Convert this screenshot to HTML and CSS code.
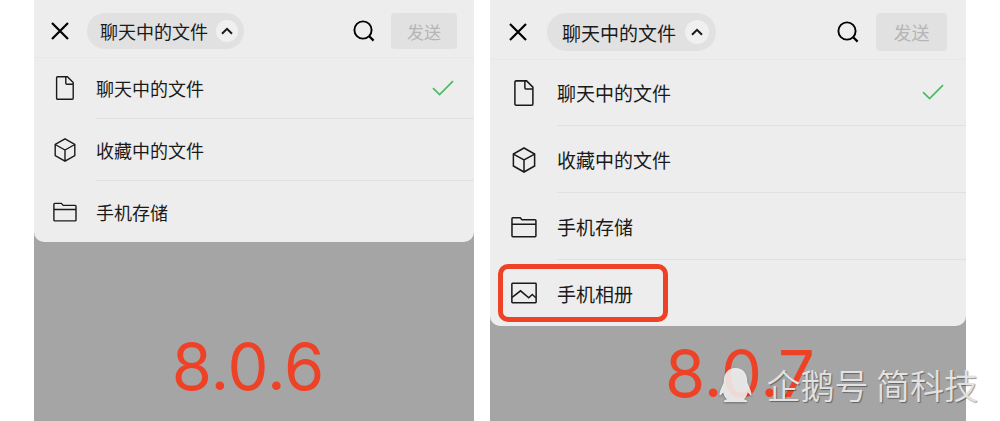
FILE: index.html
```
<!DOCTYPE html>
<html lang="zh-CN">
<head>
<meta charset="UTF-8">
<meta name="viewport" content="width=device-width, initial-scale=1.0">
<title>聊天中的文件</title>
<link rel="stylesheet" href="styles.css">
</head>
<body>
<!-- Shared icons -->
<svg class="sprite" aria-hidden="true">
  <symbol id="close" viewBox="0 0 18 18"><path d="M1 1l16 16M17 1L1 17" stroke-width="2.2"/></symbol>
  <symbol id="up" viewBox="0 0 12 8"><path d="M1 6.8l5-5 5 5" stroke-width="2"/></symbol>
  <symbol id="search" viewBox="0 0 22 22"><circle cx="10" cy="10" r="8.6" stroke-width="1.9"/><path d="M16 16l4.6 4.6" stroke-width="2.2"/></symbol>
  <symbol id="file" viewBox="0 0 24 24"><path d="M4.6 .8h9.8l5.8 5.8v15.6a1 1 0 0 1-1 1H4.6a1 1 0 0 1-1-1V1.8a1 1 0 0 1 1-1zM12.8 1v6.2a1 1 0 0 0 1 1h6.2"/></symbol>
  <symbol id="cube" viewBox="0 0 24 24"><path d="M12 .9l9.800 5.600v11L12 23.100l-9.800-5.600v-11zM2.200 6.500L12 12l9.800-5.500M12 12v11"/></symbol>
  <symbol id="folder" viewBox="0 0 24 24"><path d="M1.700 3.400h6.700l1.800 2h12a.8.8 0 0 1 .8.8v13.900a.8.8 0 0 1-.8.8H1.700a.8.8 0 0 1-.8-.8V4.200a.8.8 0 0 1 .8-.8zM1 9.500h22"/></symbol>
  <symbol id="photo" viewBox="0 0 24 24"><rect x=".8" y="3" width="22.4" height="18" rx=".6"/><path d="M1 16l7.800-6 7.600 6.400 3.200-3 3.600 3.200"/></symbol>
  <symbol id="check" viewBox="0 0 22 16"><path d="M1 8.200l6.600 6.400L21 1.200" stroke-width="1.7"/></symbol>
</svg>

<main class="compare">
  <section class="phone">
    <div class="panel">
      <header class="bar">
        <button class="icon-btn" aria-label="关闭"><svg class="close"><use href="#close"/></svg></button>
        <button class="picker">聊天中的文件<span class="arrow"><svg><use href="#up"/></svg></span></button>
        <button class="icon-btn search-btn" aria-label="搜索"><svg class="search"><use href="#search"/></svg></button>
        <button class="send" disabled>发送</button>
      </header>
      <ul class="menu">
        <li><button class="item"><svg class="icon"><use href="#file"/></svg><span class="label">聊天中的文件<svg class="check"><use href="#check"/></svg></span></button></li>
        <li><button class="item"><svg class="icon"><use href="#cube"/></svg><span class="label">收藏中的文件</span></button></li>
        <li><button class="item"><svg class="icon"><use href="#folder"/></svg><span class="label">手机存储</span></button></li>
      </ul>
    </div>
    <p class="version">8.0.6</p>
  </section>

  <section class="phone phone-new">
    <div class="panel">
      <header class="bar">
        <button class="icon-btn" aria-label="关闭"><svg class="close"><use href="#close"/></svg></button>
        <button class="picker">聊天中的文件<span class="arrow"><svg><use href="#up"/></svg></span></button>
        <button class="icon-btn search-btn" aria-label="搜索"><svg class="search"><use href="#search"/></svg></button>
        <button class="send" disabled>发送</button>
      </header>
      <ul class="menu">
        <li><button class="item"><svg class="icon"><use href="#file"/></svg><span class="label">聊天中的文件<svg class="check"><use href="#check"/></svg></span></button></li>
        <li><button class="item"><svg class="icon"><use href="#cube"/></svg><span class="label">收藏中的文件</span></button></li>
        <li><button class="item"><svg class="icon"><use href="#folder"/></svg><span class="label">手机存储</span></button></li>
        <li class="marked"><button class="item"><svg class="icon"><use href="#photo"/></svg><span class="label">手机相册</span></button></li>
      </ul>
    </div>
    <p class="version">8.0.7</p>
  </section>

  <div class="watermark">
    <svg class="penguin" viewBox="0 0 34 36"><path d="M17.500 1C10 1 6 6.500 5.800 13.500c0 2-.5 3.500-1.500 5.500C2.800 22 1.500 25 1.500 27.500c0 1.200.8 1 1.600.2l2.100-2.200c.6 3 1.900 5 3.900 6.800-2 .7-3.300 1.400-3.300 2.300 0 .3.300.4.800.4h21.800c.5 0 .8-.1.800-.4 0-.9-1.300-1.600-3.300-2.300 2-1.800 3.300-3.800 3.900-6.800l2.100 2.200c.8.8 1.600 1 1.600-.2 0-2.500-1.300-5.500-2.800-8.500-1-2-1.500-3.500-1.500-5.500C29 6.500 25 1 17.500 1z"/></svg>
    <span>企鹅号 简科技</span>
  </div>
</main>
</body>
</html>
```
FILE: styles.css
```
*,
*::after {
  box-sizing: border-box;
}
body {
  margin: 0;
  background: #fff;
  color: #1a1a1a;
  font-family: "Noto Sans CJK SC", sans-serif;
}
button {
  border: none;
  background: none;
  padding: 0;
  color: inherit;
  font: inherit;
}
svg {
  display: block;
  fill: none;
  stroke: currentColor;
  stroke-width: 1.4;
  flex: none;
}
.sprite {
  display: none;
}
.compare {
  position: relative;
  display: flex;
  gap: 16px;
  min-height: 100vh;
  padding: 0 34px;
}

/* One phone, sizes are set per version */
.phone {
  --bar: 57px;
  --row: 61px;
  --text: 18px;
  --small: 17px;
  --pill: 36px;
  --circle: 22px;
  --icon: 24px;
  --pad: 17px;
  flex: 440 1 0;
  background: #a5a5a5;
}
.phone-new {
  --bar: 59px;
  --row: 66px;
  --text: 19px;
  --small: 18px;
  --pill: 38px;
  --circle: 24px;
  --icon: 26px;
  --pad: 19px;
  flex-grow: 476;
}
.panel {
  background: #ededed;
  border-radius: 0 0 10px 10px;
  font-size: var(--text);
}
.bar {
  display: flex;
  align-items: center;
  height: var(--bar);
  padding: 5px var(--pad) 0;
  box-shadow: 0 1px #e8e8e8;
}
.close {
  width: 18px;
  height: 18px;
  color: #000;
}
.picker {
  display: flex;
  align-items: center;
  gap: 8px;
  height: var(--pill);
  margin-left: 18px;
  padding: 0 6px 0 13px;
  border-radius: 20px;
  background: #e1e1e1;
}
.arrow {
  display: flex;
  align-items: center;
  justify-content: center;
  width: var(--circle);
  height: var(--circle);
  border-radius: 50%;
  background: #f0f0f0;
}
.arrow svg {
  width: 12px;
  height: 8px;
}
.search-btn {
  margin-left: auto;
}
.search {
  width: 22px;
  height: 22px;
  color: #000;
}
.send {
  width: 66px;
  height: var(--pill);
  margin-left: 16px;
  border-radius: 4px;
  background: #e1e1e1;
  color: #b5b5b5;
  font-size: var(--small);
}

.menu {
  margin: 0;
  padding: 0;
  list-style: none;
}
.item {
  display: flex;
  align-items: center;
  gap: 19px;
  width: 100%;
  padding-left: 19px;
}
.icon {
  width: var(--icon);
  height: var(--icon);
}
.label {
  display: flex;
  align-items: center;
  justify-content: space-between;
  flex: 1;
  height: calc(var(--row) + 1px);
  padding-right: 20px;
  border-bottom: 1px solid #e1e1e1;
}
li:last-child .label {
  height: var(--row);
  border-bottom: none;
}
.check {
  width: 22px;
  height: 16px;
  color: #4cb966;
}
.phone-new .picker {
  gap: 9px;
  margin-left: 20px;
  padding: 0 7px 0 15px;
}
.phone-new .send {
  width: 71px;
  margin-left: 17px;
}
.phone-new .item {
  gap: 20px;
  padding-left: 21px;
}
.phone-new .label {
  padding-right: 22px;
}

/* Red frame round the new entry */
.marked {
  position: relative;
}
.marked::after {
  content: "";
  position: absolute;
  top: 4px;
  bottom: 4px;
  left: 8px;
  width: 170px;
  border: 5px solid #ee4226;
  border-radius: 10px;
  pointer-events: none;
}

.version {
  margin: 92px 0 0;
  padding-right: 12px;
  color: #ee4226;
  font: 65px/66px Inter, sans-serif;
  text-align: center;
}
.phone-new .version {
  margin-top: 15px;
  padding: 0 0 0 24px;
}

.watermark {
  position: absolute;
  right: 22px;
  bottom: 12px;
  display: flex;
  align-items: center;
  gap: 14px;
  color: #e2e2e2;
  font-size: 34px;
  font-weight: 350;
  line-height: 48px;
  text-shadow: 1px 1px 1px rgba(0, 0, 0, 0.4);
}
.penguin {
  width: 34px;
  height: 36px;
  fill: rgba(255, 255, 255, 0.82);
  stroke: none;
  filter: drop-shadow(0 1px 1px rgba(0, 0, 0, 0.4));
}
```
